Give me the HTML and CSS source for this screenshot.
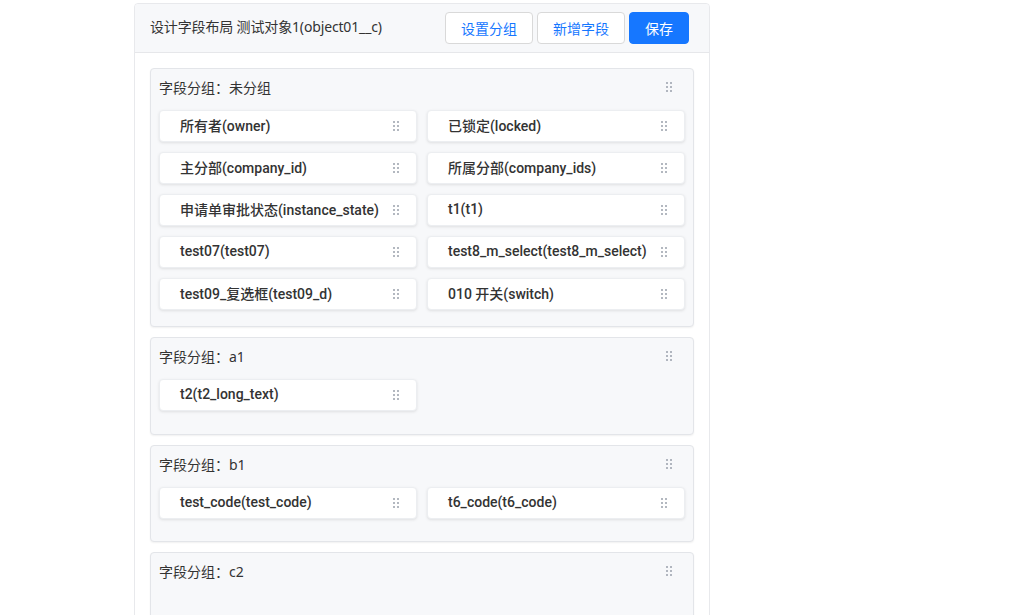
FILE: index.html
```html
<!DOCTYPE html>
<html lang="zh-CN">
<head>
<meta charset="utf-8">
<title>设计字段布局</title>
<link rel="stylesheet" href="styles.css">
</head>
<body>
<div class="page">
  <div class="card">
    <div class="card-header">
      <div class="card-title">设计字段布局 测试对象1(object01__c)</div>
      <div class="actions">
        <button class="btn">设置分组</button>
        <button class="btn">新增字段</button>
        <button class="btn btn-primary">保存</button>
      </div>
    </div>
    <div class="card-body">
      <div class="group">
        <div class="group-head"><span>字段分组：未分组</span><svg class="handle" viewBox="0 0 6 10" width="6" height="10"><circle cx="1" cy="1" r="1"/><circle cx="5" cy="1" r="1"/><circle cx="1" cy="5" r="1"/><circle cx="5" cy="5" r="1"/><circle cx="1" cy="9" r="1"/><circle cx="5" cy="9" r="1"/></svg></div>
        <div class="fields">
          <div class="field"><span>所有者(owner)</span><svg class="handle" viewBox="0 0 6 10" width="6" height="10"><circle cx="1" cy="1" r="1"/><circle cx="5" cy="1" r="1"/><circle cx="1" cy="5" r="1"/><circle cx="5" cy="5" r="1"/><circle cx="1" cy="9" r="1"/><circle cx="5" cy="9" r="1"/></svg></div>
          <div class="field"><span>已锁定(locked)</span><svg class="handle" viewBox="0 0 6 10" width="6" height="10"><circle cx="1" cy="1" r="1"/><circle cx="5" cy="1" r="1"/><circle cx="1" cy="5" r="1"/><circle cx="5" cy="5" r="1"/><circle cx="1" cy="9" r="1"/><circle cx="5" cy="9" r="1"/></svg></div>
          <div class="field"><span>主分部(company_id)</span><svg class="handle" viewBox="0 0 6 10" width="6" height="10"><circle cx="1" cy="1" r="1"/><circle cx="5" cy="1" r="1"/><circle cx="1" cy="5" r="1"/><circle cx="5" cy="5" r="1"/><circle cx="1" cy="9" r="1"/><circle cx="5" cy="9" r="1"/></svg></div>
          <div class="field"><span>所属分部(company_ids)</span><svg class="handle" viewBox="0 0 6 10" width="6" height="10"><circle cx="1" cy="1" r="1"/><circle cx="5" cy="1" r="1"/><circle cx="1" cy="5" r="1"/><circle cx="5" cy="5" r="1"/><circle cx="1" cy="9" r="1"/><circle cx="5" cy="9" r="1"/></svg></div>
          <div class="field"><span>申请单审批状态(instance_state)</span><svg class="handle" viewBox="0 0 6 10" width="6" height="10"><circle cx="1" cy="1" r="1"/><circle cx="5" cy="1" r="1"/><circle cx="1" cy="5" r="1"/><circle cx="5" cy="5" r="1"/><circle cx="1" cy="9" r="1"/><circle cx="5" cy="9" r="1"/></svg></div>
          <div class="field"><span>t1(t1)</span><svg class="handle" viewBox="0 0 6 10" width="6" height="10"><circle cx="1" cy="1" r="1"/><circle cx="5" cy="1" r="1"/><circle cx="1" cy="5" r="1"/><circle cx="5" cy="5" r="1"/><circle cx="1" cy="9" r="1"/><circle cx="5" cy="9" r="1"/></svg></div>
          <div class="field"><span>test07(test07)</span><svg class="handle" viewBox="0 0 6 10" width="6" height="10"><circle cx="1" cy="1" r="1"/><circle cx="5" cy="1" r="1"/><circle cx="1" cy="5" r="1"/><circle cx="5" cy="5" r="1"/><circle cx="1" cy="9" r="1"/><circle cx="5" cy="9" r="1"/></svg></div>
          <div class="field"><span>test8_m_select(test8_m_select)</span><svg class="handle" viewBox="0 0 6 10" width="6" height="10"><circle cx="1" cy="1" r="1"/><circle cx="5" cy="1" r="1"/><circle cx="1" cy="5" r="1"/><circle cx="5" cy="5" r="1"/><circle cx="1" cy="9" r="1"/><circle cx="5" cy="9" r="1"/></svg></div>
          <div class="field"><span>test09_复选框(test09_d)</span><svg class="handle" viewBox="0 0 6 10" width="6" height="10"><circle cx="1" cy="1" r="1"/><circle cx="5" cy="1" r="1"/><circle cx="1" cy="5" r="1"/><circle cx="5" cy="5" r="1"/><circle cx="1" cy="9" r="1"/><circle cx="5" cy="9" r="1"/></svg></div>
          <div class="field"><span>010 开关(switch)</span><svg class="handle" viewBox="0 0 6 10" width="6" height="10"><circle cx="1" cy="1" r="1"/><circle cx="5" cy="1" r="1"/><circle cx="1" cy="5" r="1"/><circle cx="5" cy="5" r="1"/><circle cx="1" cy="9" r="1"/><circle cx="5" cy="9" r="1"/></svg></div>
        </div>
      </div>
      <div class="group">
        <div class="group-head"><span>字段分组：a1</span><svg class="handle" viewBox="0 0 6 10" width="6" height="10"><circle cx="1" cy="1" r="1"/><circle cx="5" cy="1" r="1"/><circle cx="1" cy="5" r="1"/><circle cx="5" cy="5" r="1"/><circle cx="1" cy="9" r="1"/><circle cx="5" cy="9" r="1"/></svg></div>
        <div class="fields">
          <div class="field"><span>t2(t2_long_text)</span><svg class="handle" viewBox="0 0 6 10" width="6" height="10"><circle cx="1" cy="1" r="1"/><circle cx="5" cy="1" r="1"/><circle cx="1" cy="5" r="1"/><circle cx="5" cy="5" r="1"/><circle cx="1" cy="9" r="1"/><circle cx="5" cy="9" r="1"/></svg></div>
        </div>
      </div>
      <div class="group">
        <div class="group-head"><span>字段分组：b1</span><svg class="handle" viewBox="0 0 6 10" width="6" height="10"><circle cx="1" cy="1" r="1"/><circle cx="5" cy="1" r="1"/><circle cx="1" cy="5" r="1"/><circle cx="5" cy="5" r="1"/><circle cx="1" cy="9" r="1"/><circle cx="5" cy="9" r="1"/></svg></div>
        <div class="fields">
          <div class="field"><span>test_code(test_code)</span><svg class="handle" viewBox="0 0 6 10" width="6" height="10"><circle cx="1" cy="1" r="1"/><circle cx="5" cy="1" r="1"/><circle cx="1" cy="5" r="1"/><circle cx="5" cy="5" r="1"/><circle cx="1" cy="9" r="1"/><circle cx="5" cy="9" r="1"/></svg></div>
          <div class="field"><span>t6_code(t6_code)</span><svg class="handle" viewBox="0 0 6 10" width="6" height="10"><circle cx="1" cy="1" r="1"/><circle cx="5" cy="1" r="1"/><circle cx="1" cy="5" r="1"/><circle cx="5" cy="5" r="1"/><circle cx="1" cy="9" r="1"/><circle cx="5" cy="9" r="1"/></svg></div>
        </div>
      </div>
      <div class="group">
        <div class="group-head"><span>字段分组：c2</span><svg class="handle" viewBox="0 0 6 10" width="6" height="10"><circle cx="1" cy="1" r="1"/><circle cx="5" cy="1" r="1"/><circle cx="1" cy="5" r="1"/><circle cx="5" cy="5" r="1"/><circle cx="1" cy="9" r="1"/><circle cx="5" cy="9" r="1"/></svg></div>
        <div class="fields"></div>
      </div>
    </div>
  </div>
</div>
</body>
</html>
```
FILE: styles.css
```css
* { box-sizing: border-box; }
html, body {
  margin: 0;
  padding: 0;
  background: #ffffff;
  overflow: hidden;
}
body {
  font-family: "Noto Sans", "Noto Sans CJK SC", sans-serif;
  font-size: 14px;
  color: #333333;
}
.page {
  padding: 3px 0 0 134px;
}
.card {
  width: 576px;
  border: 1px solid #e8e9ec;
  border-radius: 4px;
  background: #ffffff;
}
.card-header {
  height: 49px;
  display: flex;
  align-items: center;
  justify-content: space-between;
  padding: 0 20px 0 15px;
  background: #f7f8fa;
  border-bottom: 1px solid #e6e7ea;
  border-radius: 4px 4px 0 0;
}
.card-title {
  font-size: 14px;
  color: #333333;
  line-height: 20px;
  padding-bottom: 2px;
  letter-spacing: -0.15px;
}
.actions {
  display: flex;
  gap: 4px;
}
.btn {
  height: 32px;
  padding: 0 15px;
  font-family: "Noto Sans CJK SC", sans-serif;
  font-size: 14px;
  line-height: 28px;
  color: #1677ff;
  background: #ffffff;
  border: 1px solid #d9d9d9;
  border-radius: 4px;
}
.btn-primary {
  color: #ffffff;
  background: #1677ff;
  border-color: #1677ff;
}
.card-body {
  padding: 15px 15px 0;
}
.group {
  background: #f7f8fa;
  border: 1px solid #e3e5e9;
  border-radius: 4px;
  box-shadow: 0 1px 2px rgba(0, 0, 0, 0.06);
  padding: 0 8px 16px;
  margin-bottom: 10px;
}
.group-head {
  height: 41px;
  display: flex;
  align-items: center;
  justify-content: space-between;
  padding: 0 13px 5px 0;
  font-size: 14px;
  color: #333333;
}
.fields {
  display: grid;
  grid-template-columns: 1fr 1fr;
  gap: 10px;
  min-height: 38.5px;
}
.field {
  height: 32px;
  display: flex;
  align-items: center;
  justify-content: space-between;
  padding: 0 17px 2px 20px;
  background: #ffffff;
  border: 1px solid #eceef1;
  border-radius: 4px;
  box-shadow: 0 1px 3px rgba(0, 0, 0, 0.1);
  font-family: Roboto, "Noto Sans CJK SC", sans-serif;
  font-weight: 500;
  font-size: 14px;
  color: #333333;
  white-space: nowrap;
}
.field .handle {
  margin-top: 2px;
}
.handle {
  flex: none;
  fill: #9aa1ab;
}
```
